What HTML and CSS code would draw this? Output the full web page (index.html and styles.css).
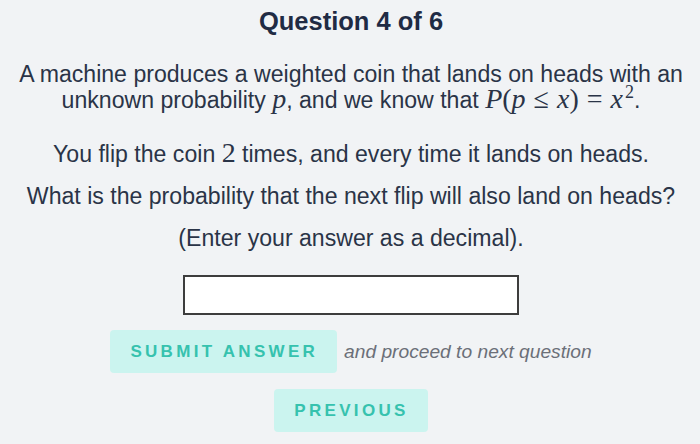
FILE: index.html
```html
<!DOCTYPE html>
<html lang="en">
<head>
    <meta charset="UTF-8">
    <meta name="viewport" content="width=device-width, initial-scale=1.0">
    <title>Question 4 of 6</title>
    <link rel="stylesheet" href="styles.css">
</head>
<body>
    <div class="quiz">
        <h1 class="quiz-title">Question 4 of 6</h1>
        <div class="question">
            <p class="lead">A machine produces a weighted coin that lands on heads with an unknown probability <span class="math"><i>p</i></span>, and we know that <span class="math"><i>P</i>(<i>p</i><span class="rel">&le;</span><i>x</i>)<span class="rel">=</span><i>x</i><sup>2</sup></span>.</p>
            <p>You flip the coin <span class="math">2</span> times, and every time it lands on heads.</p>
            <p>What is the probability that the next flip will also land on heads?</p>
            <p>(Enter your answer as a decimal).</p>
        </div>
        <input class="answer" type="text">
        <div class="submit-row">
            <button class="btn">Submit Answer</button>
            <span class="hint">and proceed to next question</span>
        </div>
        <button class="btn">Previous</button>
    </div>
</body>
</html>
```

FILE: styles.css
```css
body {
    margin: 0;
    padding: 0;
    background-color: #f1f3f5;
    font-family: "Liberation Sans", Arial, sans-serif;
    color: #2a3447;
}
.quiz {
    display: flex;
    flex-direction: column;
    align-items: center;
    text-align: center;
    padding-top: 5px;
    padding-left: 2px;
}
.quiz-title {
    margin: 0;
    font-size: 25.5px;
    line-height: 32px;
    font-weight: bold;
    color: #1f2b44;
}
.question {
    margin-top: 24px;
    width: 690px;
}
.question p {
    margin: 0 0 16px 0;
    font-size: 23.1px;
    line-height: 26px;
}
.question p.lead {
    margin-bottom: 28px;
}
.math {
    font-family: "Liberation Serif", "Times New Roman", serif;
    font-size: 28px;
    line-height: 0;
}
.math i {
    font-style: italic;
}
.math .rel {
    margin: 0 8px;
}
.math sup {
    font-size: 18px;
    line-height: 0;
    margin-left: 2px;
}
.answer {
    margin-top: 8px;
    width: 336px;
    height: 40px;
    box-sizing: border-box;
    border: 2px solid #3d3d3d;
    background: #fff;
    padding: 0 8px;
    font-size: 18px;
}
.submit-row {
    display: flex;
    align-items: center;
    margin-top: 15px;
}
.btn {
    background-color: #cbf4ef;
    color: #36c2ae;
    border: none;
    border-radius: 4px;
    font-family: "Liberation Sans", Arial, sans-serif;
    font-size: 17px;
    font-weight: bold;
    letter-spacing: 3.3px;
    text-transform: uppercase;
    padding: 0 19px 0 20px;
    height: 43px;
    cursor: pointer;
}
.hint {
    margin-left: 7px;
    font-style: italic;
    font-size: 19.2px;
    color: #6b6f78;
}
.submit-row + .btn {
    margin-top: 16px;
}
```
